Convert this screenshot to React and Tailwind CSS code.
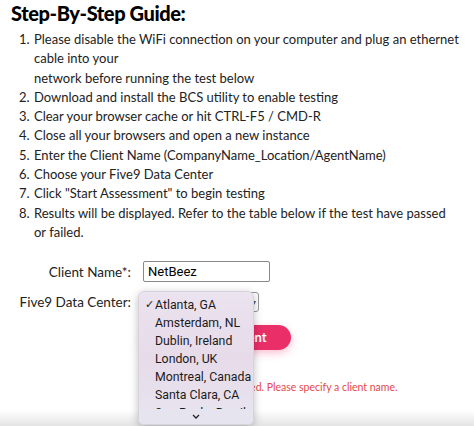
import { useState } from 'react';

const steps = [
    <>Please disable the WiFi connection on your computer and plug an ethernet cable into your<br />network before running the test below</>,
    'Download and install the BCS utility to enable testing',
    'Clear your browser cache or hit CTRL-F5 / CMD-R',
    'Close all your browsers and open a new instance',
    'Enter the Client Name (CompanyName_Location/AgentName)',
    'Choose your Five9 Data Center',
    'Click "Start Assessment" to begin testing',
    'Results will be displayed. Refer to the table below if the test have passed or\u00a0failed.',
];

const centers = ['Atlanta, GA', 'Amsterdam, NL', 'Dublin, Ireland', 'London, UK', 'Montreal, Canada', 'Santa Clara, CA', 'Sao Paulo, Brazil'];

const App = () => {
    const [clientName, setClientName] = useState('NetBeez');
    const [center] = useState('Atlanta, GA');

    return (
        <div className="relative h-[426px] w-[474px] overflow-hidden bg-white text-[#222] font-['Lato',sans-serif]">
            {/* Guide */}
            <h2 className="pl-[11px] pt-[1px] text-[20px] leading-[24px] font-black text-black tracking-[-0.4px]">Step-By-Step Guide:</h2>
            <ol className="list-decimal pl-[33px] pr-[8px] mt-[5px] text-[13px] leading-[19.3px]">
                {steps.map((step, i) => (
                    <li key={i} className="pl-[1px]">{step}</li>
                ))}
            </ol>

            {/* Form */}
            <div className="mt-[19px] grid grid-cols-[131px_1fr] gap-x-[12px] gap-y-[10px] items-center text-[13.5px]">
                <label className="text-right">Client Name*:</label>
                <input
                    value={clientName}
                    onChange={(e) => setClientName(e.target.value)}
                    className="w-[127px] h-[21px] border border-[#888] rounded-[2px] px-[4px] text-[13px] text-black font-['Roboto',sans-serif] outline-none"
                />
                <label className="text-right">Five9 Data Center:</label>
                <div className="w-[116px] h-[20px] border border-[#999] rounded-[3px] flex items-center justify-end pr-[2px] text-[8px] text-[#555]">▾</div>
            </div>

            <div className="mt-[11px] pl-[143px]">
                <button className="w-[148px] h-[25px] rounded-full bg-[#ea2f68] text-white text-[13px] font-bold shadow-[0_3px_8px_rgba(234,47,104,0.3)]">
                    Start Assessment
                </button>
            </div>

            <p className="mt-[30px] pl-[169px] text-[10.5px] text-[#e5484d] whitespace-nowrap">This field is required. Please specify a client name.</p>

            {/* bottom fade */}
            <div className="absolute left-0 right-0 bottom-0 h-[16px] bg-gradient-to-b from-white to-[#e4e4e4]"></div>

            {/* Open select menu */}
            <div className="absolute left-[138px] top-[291px] w-[116px] h-[134px] rounded-[6px] bg-gradient-to-b from-[#ebe3ef] via-[#e7dbe9] to-[#e7e5ef] shadow-[0_2px_8px_rgba(0,0,0,0.25)] border border-[#d8d2dc] overflow-hidden font-['Roboto',sans-serif] text-[12.3px] text-[#1a1a1a]">
                <div className="pt-[4px]">
                    {centers.map((c) => (
                        <div key={c} className="relative h-[18px] leading-[18px] pl-[16px] whitespace-nowrap">
                            {c === center && <span className="absolute left-[6px] text-[11px]">✓</span>}
                            {c}
                        </div>
                    ))}
                </div>
                <div className="absolute left-0 right-0 bottom-0 h-[15px] bg-[#e6e4ee] flex items-center justify-center">
                    <svg width="8" height="5" viewBox="0 0 8 5"><path d="M1 1l3 3 3-3" fill="none" stroke="#222" strokeWidth="1.3" /></svg>
                </div>
            </div>
        </div>
    );
};

export default App;
